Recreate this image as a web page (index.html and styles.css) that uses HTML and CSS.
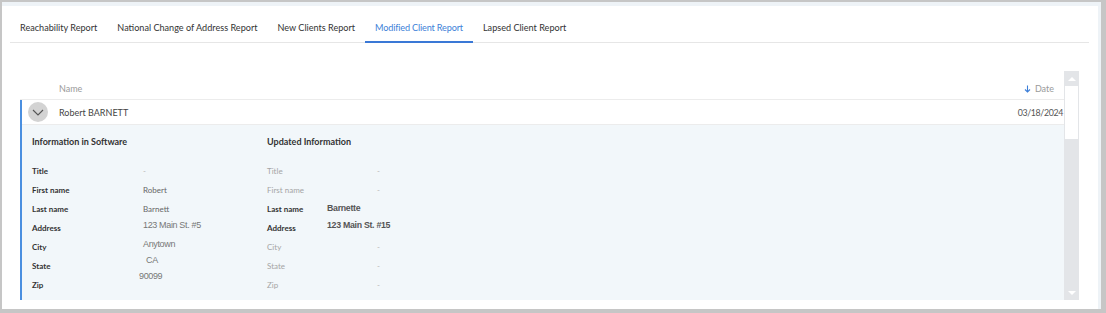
FILE: index.html
```html
<!DOCTYPE html>
<html lang="en">
<head>
<meta charset="utf-8">
<title>Modified Client Report</title>
<link rel="stylesheet" href="styles.css">
</head>
<body>
<div class="frame">
  <div class="panel">
    <nav class="tabs">
      <a class="tab">Reachability Report</a>
      <a class="tab">National Change of Address Report</a>
      <a class="tab">New Clients Report</a>
      <a class="tab active">Modified Client Report</a>
      <a class="tab">Lapsed Client Report</a>
    </nav>
    <div class="table-wrap">
      <div class="list">
        <div class="head">
          <span class="h-name">Name</span>
          <span class="h-date"><svg class="sort" width="7" height="8" viewBox="0 0 7 8"><path d="M3.5 0.5V7M1 4.5L3.5 7L6 4.5" fill="none" stroke="#3d7fd8" stroke-width="1.1"/></svg>Date</span>
        </div>
        <div class="item">
          <div class="row">
            <span class="chev"><svg width="12" height="7" viewBox="0 0 12 7"><path d="M1 1l5 5 5-5" fill="none" stroke="#555" stroke-width="1.1"/></svg></span>
            <span class="r-name">Robert BARNETT</span>
            <span class="r-date">03/18/2024</span>
          </div>
          <div class="detail">
            <section class="col col-left">
              <h3 class="col-title">Information in Software</h3>
              <div class="fields">
                <div class="f"><span class="lbl">Title</span><span class="val dash">-</span></div>
                <div class="f"><span class="lbl">First name</span><span class="val">Robert</span></div>
                <div class="f"><span class="lbl">Last name</span><span class="val">Barnett</span></div>
                <div class="f"><span class="lbl">Address</span><span class="val raw up3">123 Main St. #5</span></div>
                <div class="f"><span class="lbl">City</span><span class="val raw up3">Anytown</span></div>
                <div class="f"><span class="lbl">State</span><span class="val raw up6 right3">CA</span></div>
                <div class="f"><span class="lbl">Zip</span><span class="val raw up9 left4">90099</span></div>
              </div>
            </section>
            <section class="col col-right">
              <h3 class="col-title">Updated Information</h3>
              <div class="fields">
                <div class="f"><span class="lbl muted">Title</span><span class="val dash far">-</span></div>
                <div class="f"><span class="lbl muted">First name</span><span class="val dash far">-</span></div>
                <div class="f"><span class="lbl">Last name</span><span class="val raw bold up1">Barnette</span></div>
                <div class="f"><span class="lbl">Address</span><span class="val raw bold up3">123 Main St. #15</span></div>
                <div class="f"><span class="lbl muted">City</span><span class="val dash far">-</span></div>
                <div class="f"><span class="lbl muted">State</span><span class="val dash far">-</span></div>
                <div class="f"><span class="lbl muted">Zip</span><span class="val dash far">-</span></div>
              </div>
            </section>
          </div>
        </div>
      </div>
      <div class="scrollbar">
        <span class="sb-btn"><span class="tri-up"></span></span>
        <span class="sb-thumb"></span>
        <span class="sb-track"></span>
        <span class="sb-btn"><span class="tri-down"></span></span>
      </div>
    </div>
  </div>
</div>
</body>
</html>
```
FILE: styles.css
```css
* { box-sizing: border-box; }
html, body { margin: 0; padding: 0; }
body {
  background: #c6c6c6;
  font-family: "Lato", "Noto Sans", sans-serif;
  color: #333;
  width: 1106px;
  height: 313px;
  overflow: hidden;
}
.frame {
  padding: 2px 5px 4px 2px;
  height: 313px;
}
.panel {
  background: #ffffff;
  height: 307px;
  border-top: 4px solid #eef3f7;
  border-right: 3px solid #eef3f7;
  display: flex;
  flex-direction: column;
}
.tabs {
  display: flex;
  margin: 0 9px 0 8px;
  border-bottom: 1px solid #e6e6e6;
  height: 37px;
}
.tab {
  padding: 15px 10px 0;
  font-size: 9.1px;
  line-height: 13px;
  color: #333;
  border-bottom: 2px solid transparent;
  margin-bottom: -1px;
  white-space: nowrap;
}
.tab.active {
  color: #3d7fd8;
  border-bottom-color: #3a78d6;
  letter-spacing: -0.15px;
}
.table-wrap {
  display: flex;
  margin: 28px 19px 0 18px;
  height: 229px;
}
.list {
  flex: 1;
  display: flex;
  flex-direction: column;
}
.head {
  display: flex;
  justify-content: space-between;
  align-items: center;
  height: 29px;
  padding: 12px 10px 4px 39px;
  border-bottom: 1px solid #ececec;
  font-size: 9px;
  line-height: 12px;
  color: #9a9a9a;
}
.h-date { display: flex; align-items: center; gap: 4px; }
.sort { display: block; }
.item {
  border-left: 2px solid #4a8fe0;
  flex: 1;
  display: flex;
  flex-direction: column;
}
.row {
  display: flex;
  align-items: center;
  height: 25px;
  padding: 0 1px 0 6px;
  border-bottom: 1px solid #ececec;
  font-size: 9px;
  color: #444;
}
.chev {
  width: 20px;
  height: 20px;
  border-radius: 50%;
  background: #d3d3d3;
  display: flex;
  align-items: center;
  justify-content: center;
  margin-right: 11px;
}
.chev svg { display: block; margin-top: 1px; }
.r-name { flex: 1; }
.r-date { color: #555; font-size: 8.8px; letter-spacing: -0.35px; }
.detail {
  flex: 1;
  background: #f2f7fa;
  display: flex;
  padding: 11px 0 0 10px;
}
.col { width: 235px; }
.col-title {
  margin: 0 0 13px;
  font-size: 9px;
  line-height: 12px;
  font-weight: 700;
  color: #333;
}
.fields { display: flex; flex-direction: column; }
.f {
  display: grid;
  grid-template-columns: 111px 1fr;
  grid-template-rows: 19px;
  align-items: center;
  height: 19px;
}
.col-right .f { grid-template-columns: 60px 1fr; }
.lbl {
  font-size: 8px;
  font-weight: 700;
  color: #333;
}
.lbl.muted { font-weight: 400; color: #a5a5a5; }
.val {
  font-size: 8px;
  color: #666;
}
.val.dash { color: #b5b5b5; }
.val.far { margin-left: 50px; }
.val.raw {
  font-family: "Liberation Sans", Arial, sans-serif;
  font-size: 9px;
  letter-spacing: -0.35px;
  line-height: 10px;
  color: #777;
}
.val.bold { font-weight: 700; font-size: 8.8px; letter-spacing: -0.3px; color: #555; }
.up1 { margin-bottom: 2px; }
.up3 { margin-bottom: 6px; }
.up6 { margin-bottom: 12px; }
.up9 { margin-bottom: 18px; }
.right3 { margin-left: 3px; }
.left4 { margin-left: -4px; }
.scrollbar {
  width: 15px;
  background: #e3e5e8;
  display: flex;
  flex-direction: column;
}
.sb-btn {
  height: 15px;
  display: flex;
  align-items: center;
  justify-content: center;
}
.tri-up, .tri-down {
  width: 0; height: 0;
  border-left: 4px solid transparent;
  border-right: 4px solid transparent;
}
.tri-up { border-bottom: 4px solid #ffffff; }
.tri-down { border-top: 4px solid #ffffff; }
.sb-thumb {
  height: 53px;
  margin: 0 1px;
  background: #ffffff;
}
.sb-track { flex: 1; }
```
